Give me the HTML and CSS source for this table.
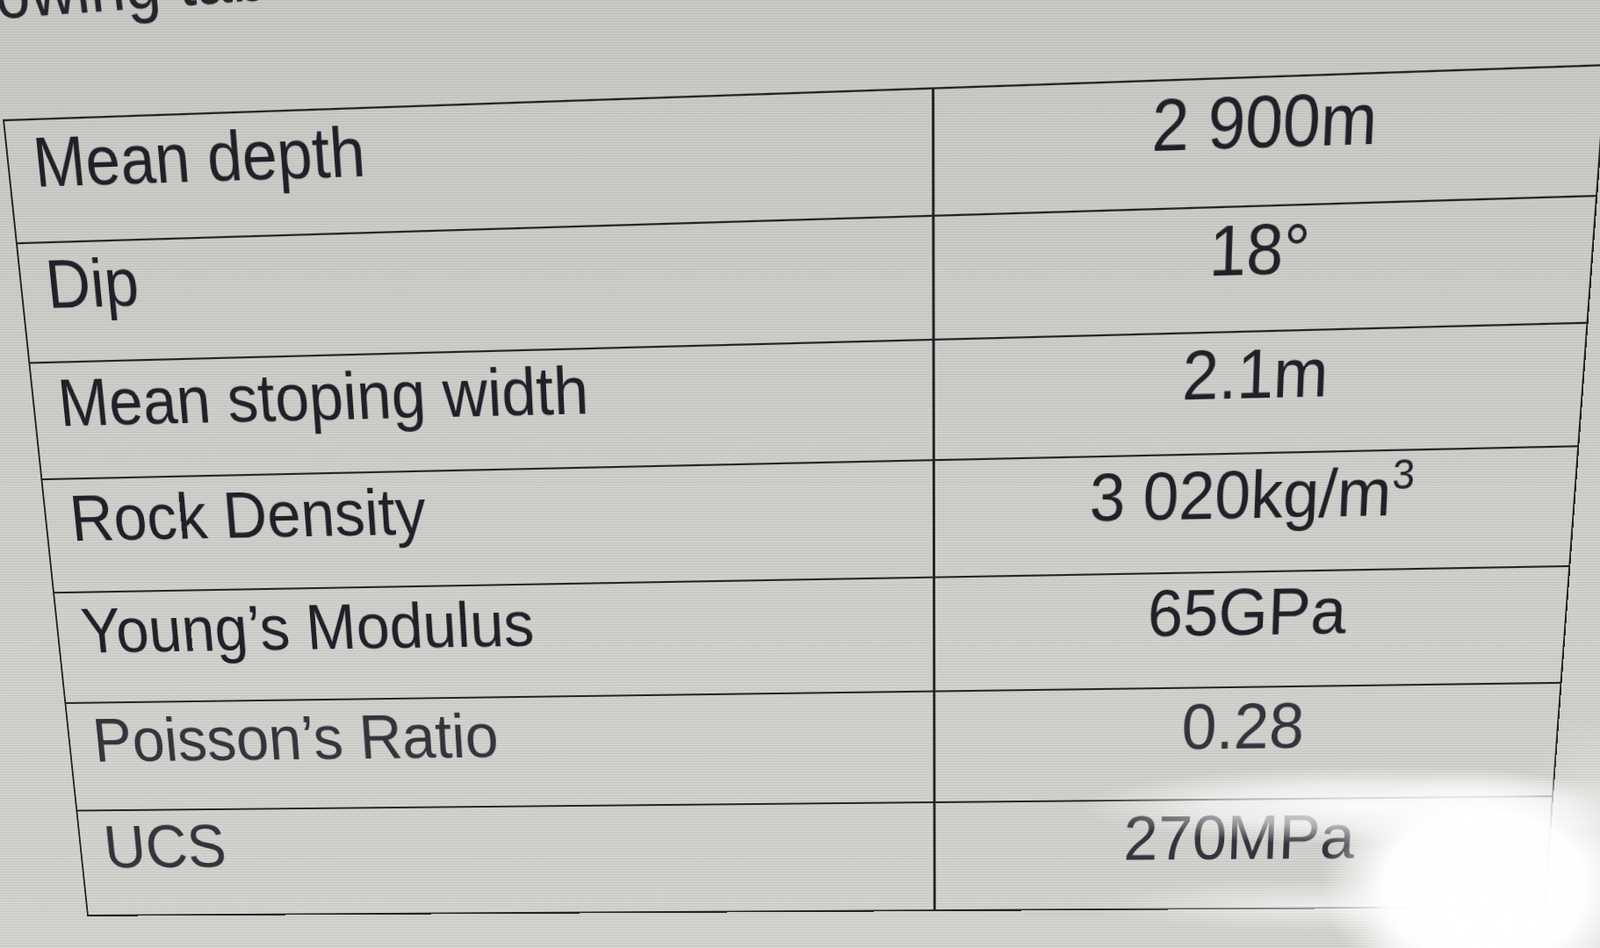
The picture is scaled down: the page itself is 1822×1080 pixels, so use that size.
FILE: index.html
```html
<!DOCTYPE html>
<html lang="en">
<head>
<meta charset="utf-8">
<title>Stope parameters</title>
<link rel="stylesheet" href="styles.css">
</head>
<body>
<div class="screen">
  <div class="sheet">
    <p class="caption">following table</p>
    <table class="params">
      <colgroup>
        <col class="col-name">
        <col class="col-value">
      </colgroup>
      <tbody>
        <tr><td class="name">Mean depth</td><td class="value">2 900m</td></tr>
        <tr><td class="name">Dip</td><td class="value">18°</td></tr>
        <tr><td class="name">Mean stoping width</td><td class="value">2.1m</td></tr>
        <tr><td class="name">Rock Density</td><td class="value">3 020kg/m<sup>3</sup></td></tr>
        <tr><td class="name">Young’s Modulus</td><td class="value">65GPa</td></tr>
        <tr class="faint"><td class="name">Poisson’s Ratio</td><td class="value">0.28</td></tr>
        <tr class="faint"><td class="name">UCS</td><td class="value">270MPa</td></tr>
      </tbody>
    </table>
  </div>
  <div class="glare"></div>
</div>
</body>
</html>
```

FILE: styles.css
```css
html, body {
  margin: 0;
  height: 100%;
  overflow: hidden;
}

body {
  background: #cfcfcb;
  font-family: "Liberation Sans", Arial, sans-serif;
}

.screen {
  position: relative;
  width: 1822px;
  height: 1080px;
  overflow: hidden;
  background:
    repeating-linear-gradient(to bottom, rgba(60, 60, 60, 0.07) 0, rgba(60, 60, 60, 0.07) 1px, rgba(0, 0, 0, 0) 1px, rgba(0, 0, 0, 0) 3px),
    linear-gradient(to bottom, #c9c9c5 0%, #d0d0cc 60%, #d3d3cf 100%);
}

/* the photographed document: laid out flat, then projected like the photo */
.sheet {
  width: 1780px;
  transform-origin: 0 0;
  transform: matrix3d(0.969572, -0.037618, 0, -0.000030475,
                      0.118874, 1.133721, 0, 0.00010998,
                      0, 0, 1, 0,
                      -16.376, -48.797, 0, 0.982073);
}

.caption {
  margin: 0 0 90px -87px;
  font-size: 73px;
  line-height: 73px;
  color: #24242c;
  white-space: nowrap;
  transform-origin: 90px 62px;
  transform: rotate(-1.6deg);
}

.params {
  width: 1780px;
  border-collapse: collapse;
  table-layout: fixed;
  color: #202028;
}

.col-name {
  width: 1056px;
}

.col-value {
  width: 724px;
}

.params td {
  height: 127px;
  box-sizing: border-box;
  border: 2px solid #222226;
  padding: 6px 0 0 29px;
  vertical-align: top;
  font-size: 73px;
  line-height: 73px;
  white-space: nowrap;
}

.params td.value {
  padding-left: 0;
  text-align: center;
  border-left-width: 3px;
}

.params sup {
  font-size: 0.62em;
  line-height: 0;
  vertical-align: 0.62em;
}

.params .faint td {
  color: #34343c;
}

/* light reflection on the bottom right of the screen */
.glare {
  position: absolute;
  inset: 0;
  pointer-events: none;
  background:
    radial-gradient(ellipse 185px 135px at 1690px 1010px, rgba(255, 255, 255, 1) 0%, rgba(255, 255, 255, 0.97) 62%, rgba(255, 255, 255, 0) 100%),
    radial-gradient(ellipse 140px 80px at 1690px 1080px, rgba(255, 255, 255, 0.95) 0%, rgba(255, 255, 255, 0) 100%),
    radial-gradient(ellipse 330px 45px at 1560px 918px, rgba(255, 255, 255, 0.95) 0%, rgba(255, 255, 255, 0.6) 55%, rgba(255, 255, 255, 0) 100%),
    radial-gradient(ellipse 260px 30px at 1500px 1032px, rgba(255, 255, 255, 0.6) 0%, rgba(255, 255, 255, 0) 100%),
    radial-gradient(ellipse 90px 180px at 1815px 990px, rgba(255, 255, 255, 0.45) 0%, rgba(255, 255, 255, 0) 100%);
}
```
